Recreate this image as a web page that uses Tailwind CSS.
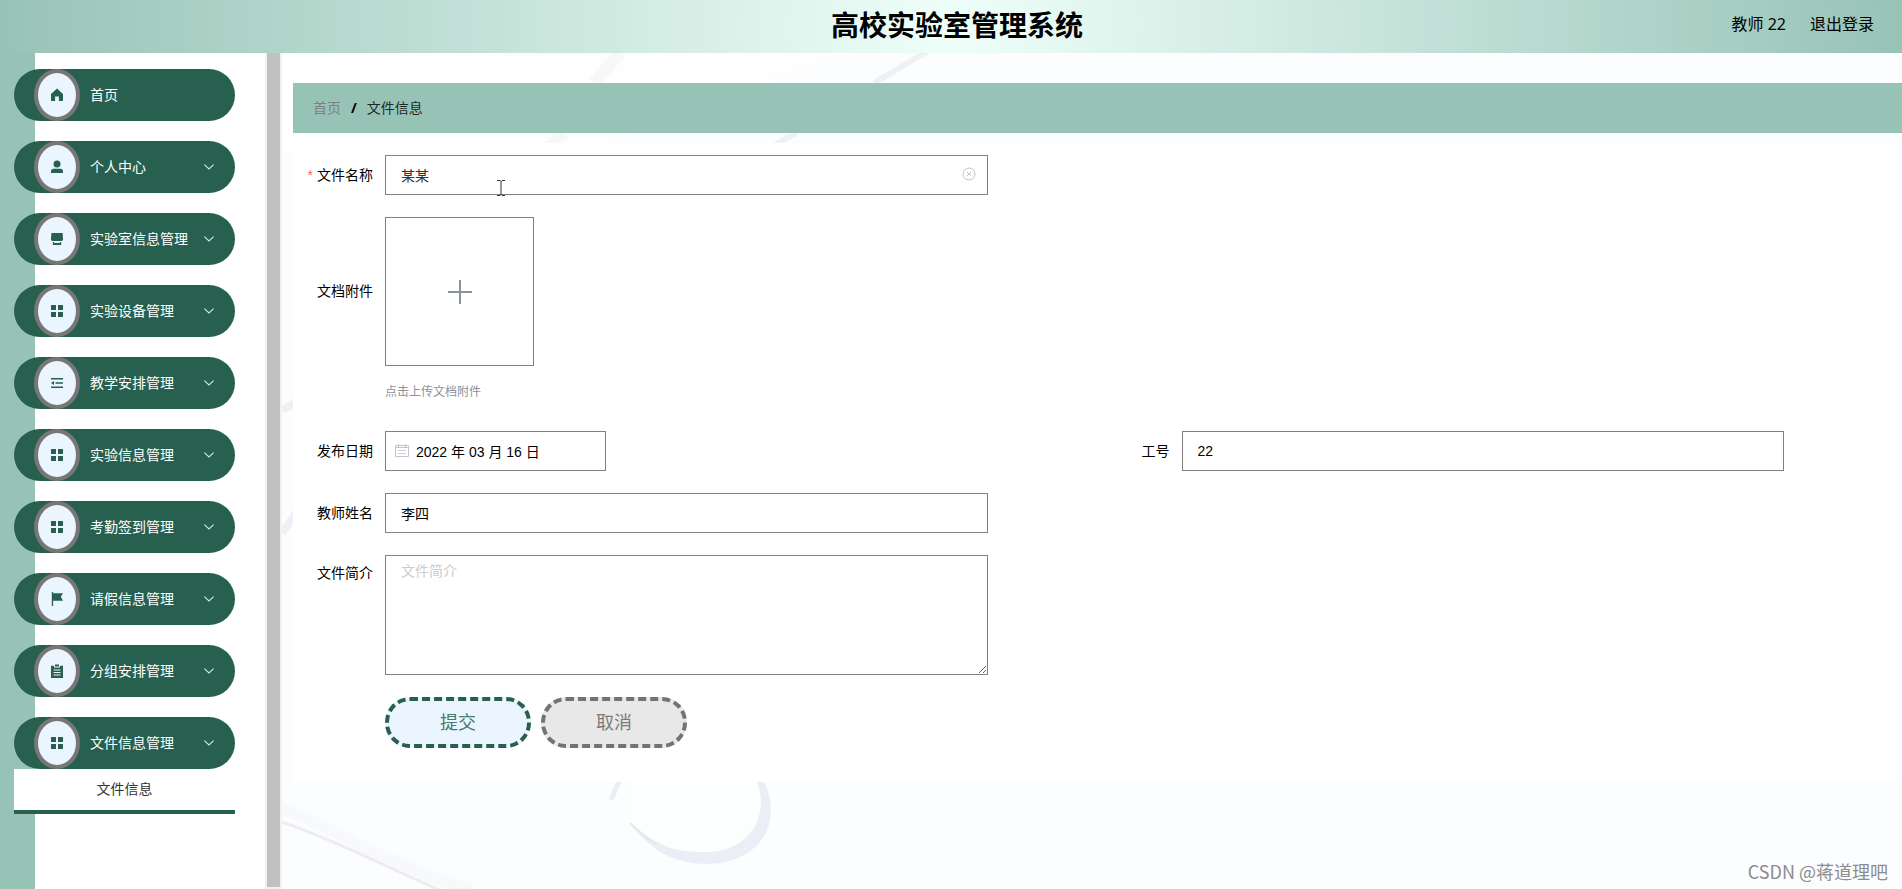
<!DOCTYPE html>
<html lang="zh-CN">
<head>
  <meta charset="UTF-8">
  <title>高校实验室管理系统</title>
  <meta name="viewport" content="width=device-width, initial-scale=1.0">
  <script src="https://cdn.jsdelivr.net/npm/@tailwindcss/browser@4"></script>
</head>
<body class="relative flex min-h-screen flex-col bg-white font-['Liberation_Sans','Noto_Sans_CJK_SC',sans-serif] text-sm text-black">

  <!-- icons -->
  <svg class="hidden">
    <symbol id="i-home" viewBox="0 0 14 14"><path d="M7 .6 13 6v6.2a.8.8 0 0 1-.8.8H8.900V8.600H5.100V13H1.800a.8.8 0 0 1-.8-.8V6z"/></symbol>
    <symbol id="i-user" viewBox="0 0 14 14"><circle cx="7" cy="3.900" r="3.500"/><path d="M1 13v-1.500A2.700 2.700 0 0 1 3.700 8.800h6.600a2.700 2.700 0 0 1 2.700 2.700V13z"/></symbol>
    <symbol id="i-shop" viewBox="0 0 14 14"><path d="M1.400 1h11.200l.4 6.200A1.800 1.800 0 0 1 11.500 9H2.500A1.800 1.800 0 0 1 1 7.200z"/><path d="M2.800 10h1l.5.900h5.400l.5-.9h1V13H2.800z"/></symbol>
    <symbol id="i-menu" viewBox="0 0 14 14"><path d="M1 1h5v5H1zM8 1h5v5H8zM1 8h5v5H1zM8 8h5v5H8z"/></symbol>
    <symbol id="i-fold" viewBox="0 0 14 14"><path d="M1 2h12v1.500H1zM5.500 6.300H13v1.500H5.500zM1 10.600h12v1.500H1zM1 7l3-2v4z"/></symbol>
    <symbol id="i-flag" viewBox="0 0 14 14"><path d="M1.800 0h1.300v1.300H13l-2.200 3.500L13 8.800H3.100V14H1.800z"/></symbol>
    <symbol id="i-order" viewBox="0 0 14 14"><path fill-rule="evenodd" d="M1 1.800h3V3.500h6V1.800h3V14H1zM3.500 5.500v1h7v-1zM3.500 8v1h7V8zM3.500 10.500v1h7v-1z"/><path d="M5 .500h4v2H5z"/></symbol>
    <symbol id="i-down" viewBox="0 0 14 14"><path d="m2.600 4.800 4.400 4.200 4.400-4.200" fill="none" stroke="#d4dfdc" stroke-width="1.100" stroke-linecap="round"/></symbol>
  </svg>

  <header class="flex h-[53px] items-center bg-[radial-gradient(circle_at_center,#effffa_0%,#97c3b6_100%)] pr-7 pl-10 font-['Noto_Sans','Noto_Sans_CJK_SC',sans-serif]">
    <div class="flex-1"></div>
    <h1 class="pb-1 text-[28px] leading-10 font-bold">高校实验室管理系统</h1>
    <div class="flex flex-1 justify-end gap-6 pb-1.5 text-base">
      <span>教师 22</span>
      <a href="#">退出登录</a>
    </div>
  </header>

  <div class="flex flex-1">
    <aside class="w-[265px] shrink-0 bg-[linear-gradient(to_right,#97c3b6_35px,#ffffff_35px)] pt-4 pr-[30px] pl-3.5">
      <nav class="flex flex-col gap-5 text-white">
        <a href="#" class="flex h-[52px] items-center rounded-full bg-[#286050] pr-[19px] pl-5">
          <span class="mr-2.5 flex h-full w-[46px] items-center justify-center rounded-[50%] border-4 border-[#777777] bg-[#eaf5ff] text-[#286050]"><svg class="size-3.5 fill-current"><use href="#i-home"/></svg></span>
          <span class="flex-1">首页</span>
        </a>
        <a href="#" class="flex h-[52px] items-center rounded-full bg-[#286050] pr-[19px] pl-5">
          <span class="mr-2.5 flex h-full w-[46px] items-center justify-center rounded-[50%] border-4 border-[#777777] bg-[#eaf5ff] text-[#286050]"><svg class="size-3.5 fill-current"><use href="#i-user"/></svg></span>
          <span class="flex-1">个人中心</span>
          <svg class="size-3.5"><use href="#i-down"/></svg>
        </a>
        <a href="#" class="flex h-[52px] items-center rounded-full bg-[#286050] pr-[19px] pl-5">
          <span class="mr-2.5 flex h-full w-[46px] items-center justify-center rounded-[50%] border-4 border-[#777777] bg-[#eaf5ff] text-[#286050]"><svg class="size-3.5 fill-current"><use href="#i-shop"/></svg></span>
          <span class="flex-1">实验室信息管理</span>
          <svg class="size-3.5"><use href="#i-down"/></svg>
        </a>
        <a href="#" class="flex h-[52px] items-center rounded-full bg-[#286050] pr-[19px] pl-5">
          <span class="mr-2.5 flex h-full w-[46px] items-center justify-center rounded-[50%] border-4 border-[#777777] bg-[#eaf5ff] text-[#286050]"><svg class="size-3.5 fill-current"><use href="#i-menu"/></svg></span>
          <span class="flex-1">实验设备管理</span>
          <svg class="size-3.5"><use href="#i-down"/></svg>
        </a>
        <a href="#" class="flex h-[52px] items-center rounded-full bg-[#286050] pr-[19px] pl-5">
          <span class="mr-2.5 flex h-full w-[46px] items-center justify-center rounded-[50%] border-4 border-[#777777] bg-[#eaf5ff] text-[#286050]"><svg class="size-3.5 fill-current"><use href="#i-fold"/></svg></span>
          <span class="flex-1">教学安排管理</span>
          <svg class="size-3.5"><use href="#i-down"/></svg>
        </a>
        <a href="#" class="flex h-[52px] items-center rounded-full bg-[#286050] pr-[19px] pl-5">
          <span class="mr-2.5 flex h-full w-[46px] items-center justify-center rounded-[50%] border-4 border-[#777777] bg-[#eaf5ff] text-[#286050]"><svg class="size-3.5 fill-current"><use href="#i-menu"/></svg></span>
          <span class="flex-1">实验信息管理</span>
          <svg class="size-3.5"><use href="#i-down"/></svg>
        </a>
        <a href="#" class="flex h-[52px] items-center rounded-full bg-[#286050] pr-[19px] pl-5">
          <span class="mr-2.5 flex h-full w-[46px] items-center justify-center rounded-[50%] border-4 border-[#777777] bg-[#eaf5ff] text-[#286050]"><svg class="size-3.5 fill-current"><use href="#i-menu"/></svg></span>
          <span class="flex-1">考勤签到管理</span>
          <svg class="size-3.5"><use href="#i-down"/></svg>
        </a>
        <a href="#" class="flex h-[52px] items-center rounded-full bg-[#286050] pr-[19px] pl-5">
          <span class="mr-2.5 flex h-full w-[46px] items-center justify-center rounded-[50%] border-4 border-[#777777] bg-[#eaf5ff] text-[#286050]"><svg class="size-3.5 fill-current"><use href="#i-flag"/></svg></span>
          <span class="flex-1">请假信息管理</span>
          <svg class="size-3.5"><use href="#i-down"/></svg>
        </a>
        <a href="#" class="flex h-[52px] items-center rounded-full bg-[#286050] pr-[19px] pl-5">
          <span class="mr-2.5 flex h-full w-[46px] items-center justify-center rounded-[50%] border-4 border-[#777777] bg-[#eaf5ff] text-[#286050]"><svg class="size-3.5 fill-current"><use href="#i-order"/></svg></span>
          <span class="flex-1">分组安排管理</span>
          <svg class="size-3.5"><use href="#i-down"/></svg>
        </a>
        <div>
          <a href="#" class="flex h-[52px] items-center rounded-full bg-[#286050] pr-[19px] pl-5">
            <span class="mr-2.5 flex h-full w-[46px] items-center justify-center rounded-[50%] border-4 border-[#777777] bg-[#eaf5ff] text-[#286050]"><svg class="size-3.5 fill-current"><use href="#i-menu"/></svg></span>
            <span class="flex-1">文件信息管理</span>
            <svg class="size-3.5"><use href="#i-down"/></svg>
          </a>
          <a href="#" class="block border-b-4 border-[#286050] bg-white text-center leading-[41px] text-[#333333]">文件信息</a>
        </div>
      </nav>
    </aside>

    <!-- sidebar scrollbar -->
    <div class="flex w-[17px] shrink-0 bg-[#f1f1f1] px-0.5 pb-0.5">
      <div class="flex-1 bg-[#c1c1c1]"></div>
    </div>

    <main class="relative min-w-0 flex-1 overflow-hidden bg-[#fcfdff] pt-[30px] pl-[11px]">
      <!-- faint stethoscope drawing behind the content -->
      <svg class="absolute top-0 left-0 h-[836px] w-[1620px]" viewBox="0 0 1620 836" fill="none">
        <path d="M0 0H560L300 100H0Z" fill="#fefefe"/>
        <path d="M338 0 312 30M282 80 262 98" stroke="#f8f8f8" stroke-width="12"/>
        <path d="M646-2 592 30M514 80 486 96" stroke="#f0f1f3" stroke-width="6"/>
        <path d="M0 357 14 349M0 480 14 460" stroke="#edf0f5" stroke-width="8"/>
        <path d="M0 755C60 780 100 808 190 838" stroke="#f8f9fb" stroke-width="12"/>
        <path d="M0 769C60 790 100 812 160 838" stroke="#ededf0" stroke-width="3"/>
        <path d="M340 770 350 728H474L482 750C482 780 465 799 430 800 400 799 380 798 350 770Z" fill="#fdfefe"/>
        <path d="M329 747 337 728" stroke="#ebedf3" stroke-width="5"/>
        <path d="M350 773C372 800 395 811 425 811 462 811 488 790 489 758 489 742 484 733 480 725L474 725C479 740 480 748 478 758 474 784 450 799 425 799 398 799 384 798 350 773Z" fill="#ebeef4"/>
        <path d="M348 770C356 778 362 783 374 791" stroke="#e5e8eb" stroke-width="2"/>
      </svg>

      <div class="relative">
        <nav class="flex h-[50px] items-center gap-2.5 bg-[#97c3b6] pl-5">
          <a href="#" class="text-[#808080]">首页</a>
          <span class="font-['Noto_Sans'] font-bold">/</span>
          <span class="text-[#1c2b27]">文件信息</span>
        </nav>

        <form class="mt-2.5 flex flex-col gap-[22px] bg-white px-2 pt-3 pb-[34px]">
          <div class="grid grid-cols-2">
            <div class="flex pr-[110px]">
              <label for="name" class="w-[84px] shrink-0 pr-3 text-right leading-10"><span class="mr-1 text-[#f56c6c]">*</span>文件名称</label>
              <div class="relative flex-1">
                <input id="name" type="text" value="某某" class="h-10 w-full border border-[#808080] bg-white px-[15px] text-[#333333]">
                <button type="button" aria-label="清空" class="absolute top-3 right-3">
                  <svg class="size-3.5" viewBox="0 0 14 14" fill="none" stroke="#c0c4cc"><circle cx="7" cy="7" r="6"/><path d="m5 5 4 4M9 5 5 9"/></svg>
                </button>
                <svg class="absolute top-6 left-28 h-[18px] w-2" viewBox="0 0 8 18" fill="none" stroke="#333333"><path d="M0 1.500h3l1 1 1-1h3M4 2v14M0 16.500h3l1-1 1 1h3"/></svg>
              </div>
            </div>
          </div>

          <div class="flex">
            <label for="file" class="w-[84px] shrink-0 pr-3 text-right leading-[149px]">文档附件</label>
            <div class="h-48">
              <button id="file" type="button" aria-label="上传" class="flex size-[149px] items-center justify-center border border-[#808080] bg-white">
                <svg class="size-6" viewBox="0 0 24 24" stroke="#8c939d" stroke-width="2"><path d="M12 0v24M0 12h24"/></svg>
              </button>
              <p class="mt-3.5 text-xs leading-6 text-[#8b929c]">点击上传文档附件</p>
            </div>
          </div>

          <div class="grid grid-cols-2">
            <div class="flex pr-[110px]">
              <label for="date" class="w-[84px] shrink-0 pr-3 text-right leading-10">发布日期</label>
              <div class="relative w-[221px]">
                <input id="date" type="text" value="2022 年 03 月 16 日" class="h-10 w-full border border-[#808080] bg-white pr-[15px] pl-[30px]">
                <svg class="absolute top-3 left-2.5 size-3.5" viewBox="0 0 14 14" fill="none" stroke="#c0c4cc"><path d="M.5 2.500h13v11H.5zM.5 4.500h13M3.500 1v3M10.500 1v3"/><path d="M3 7.500h8M3 10.500h8" stroke-width=".8"/></svg>
              </div>
            </div>
            <div class="flex pr-[110px]">
              <label for="code" class="w-[84px] shrink-0 pr-3 text-right leading-10">工号</label>
              <input id="code" type="text" value="22" class="h-10 w-full border border-[#808080] bg-white px-[15px]">
            </div>
          </div>

          <div class="grid grid-cols-2">
            <div class="flex pr-[110px]">
              <label for="teacher" class="w-[84px] shrink-0 pr-3 text-right leading-10">教师姓名</label>
              <input id="teacher" type="text" value="李四" class="h-10 w-full border border-[#808080] bg-white px-[15px]">
            </div>
          </div>

          <div class="grid grid-cols-2">
            <div class="flex pr-[110px]">
              <label for="intro" class="w-[84px] shrink-0 pr-3 text-right leading-9">文件简介</label>
              <textarea id="intro" placeholder="文件简介" class="block h-[120px] w-full resize border border-[#808080] bg-white px-[15px] py-[5px] placeholder:text-[#cccccc]"></textarea>
            </div>
          </div>

          <div class="flex gap-2.5 pl-[84px] text-lg">
            <button type="submit" class="h-[51px] w-[146px] rounded-[25px] border-4 border-dashed border-[#286050] bg-[#eaf5ff] text-[#4a786b]">提交</button>
            <button type="button" class="h-[51px] w-[146px] rounded-[25px] border-4 border-dashed border-[#737373] bg-[#e8e8e8] text-[#7c7c7c]">取消</button>
          </div>
        </form>
      </div>
    </main>
  </div>

  <div class="absolute right-3.5 bottom-1.5 font-['Noto_Sans_CJK_SC',sans-serif] text-lg leading-6 text-[#8c8c8c]">CSDN @蒋道理吧</div>
</body>
</html>
